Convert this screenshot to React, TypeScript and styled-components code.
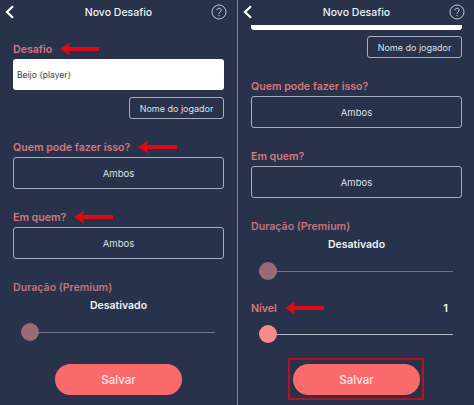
import React from "react";
import styled, { createGlobalStyle } from "styled-components";

const Global = createGlobalStyle`
  html, body { margin: 0; padding: 0; background: #28324a; }
  #root { width: 474px; height: 405px; overflow: hidden; }
  *, *::before, *::after { box-sizing: border-box; }
`;

const Page = styled.div`
  display: grid;
  grid-template-columns: 237px 237px;
  width: 474px;
  height: 405px;
  font-family: Inter, "Liberation Sans", sans-serif;
  background: #28324a;
`;

const Phone = styled.section<{ $divider?: boolean }>`
  display: flex;
  flex-direction: column;
  height: 405px;
  padding: 0 ${(p) => (p.$divider ? "12px" : "13px")} 10px 13px;
  border-left: ${(p) => (p.$divider ? "1px solid #7d8796" : "none")};
  overflow: hidden;
`;

const Header = styled.header`
  flex: none;
  display: flex;
  align-items: center;
  justify-content: space-between;
  height: 24px;
  margin: 0 -4px 0 -12px;
`;

const Title = styled.h1`
  margin: 0 0 0 8px;
  font-size: 10.5px;
  font-weight: 500;
  color: #eef0f4;
`;

const IconSlot = styled.span`
  display: flex;
  width: 18px;
  height: 18px;
  align-items: center;
  justify-content: center;
`;

const Label = styled.div<{ $top: number; $dim?: boolean }>`
  display: flex;
  align-items: center;
  height: 16px;
  margin-top: ${(p) => p.$top}px;
  font-size: 10.6px;
  font-weight: 600;
  color: ${(p) => (p.$dim ? "#c4727b" : "#d9767e")};
`;

const ArrowMark = styled.svg`
  flex: none;
  margin-left: 8px;
`;

const LevelValue = styled.span`
  margin-left: auto;
  margin-right: 14px;
  font-size: 11px;
  color: #f2f3f6;
`;

const TextInput = styled.div`
  height: 31px;
  margin-top: 2px;
  padding-left: 4px;
  display: flex;
  align-items: center;
  background: #fff;
  border-radius: 3px;
  font-size: 8.5px;
  color: #3c3f48;
`;

const InputEdge = styled.div`
  height: 5px;
  margin-top: 1px;
  background: #fff;
  border-radius: 0 0 3px 3px;
`;

const TagButton = styled.button<{ $top: number }>`
  display: block;
  align-self: flex-end;
  width: 95px;
  height: 22px;
  margin-top: ${(p) => p.$top}px;
  padding: 0;
  background: transparent;
  border: 1px solid #a4afc3;
  border-radius: 3px;
  font-family: inherit;
  font-size: 9px;
  color: #dfe1e6;
`;

const Choice = styled.div`
  flex: none;
  display: flex;
  align-items: center;
  justify-content: center;
  height: 32px;
  margin-top: 2px;
  border: 1px solid #a4afc3;
  border-radius: 3px;
  font-size: 9.5px;
  color: #dfe1e6;
`;

const Value = styled.div<{ $top: number }>`
  margin-top: ${(p) => p.$top}px;
  height: 16px;
  line-height: 16px;
  text-align: center;
  font-size: 10.5px;
  font-weight: 600;
  color: #f0f1f5;
`;

const Slider = styled.div<{ $top: number; $active?: boolean }>`
  flex: none;
  position: relative;
  height: 18px;
  margin: ${(p) => p.$top}px 9px 0 8px;
  display: flex;
  align-items: center;
  &::before {
    content: "";
    flex: 1;
    height: 1px;
    background: ${(p) => (p.$active ? "#b3b8c6" : "#6e7484")};
  }
  &::after {
    content: "";
    position: absolute;
    left: 0;
    top: 0;
    width: 18px;
    height: 18px;
    border-radius: 50%;
    background: ${(p) => (p.$active ? "#fc8a88" : "#9c6a76")};
  }
`;

const SaveRow = styled.div<{ $highlight?: boolean }>`
  margin-top: auto;
  display: flex;
  justify-content: center;
  position: relative;
  ${(p) =>
    p.$highlight
      ? `&::after {
          content: "";
          position: absolute;
          left: 37px;
          top: -6px;
          width: 136px;
          height: 42px;
          border: 2px solid #b5121f;
        }`
      : ""}
`;

const SaveButton = styled.button`
  width: 127px;
  height: 31px;
  padding: 0;
  border: none;
  border-radius: 16px;
  background: #fb6a6b;
  font-family: inherit;
  font-size: 11.5px;
  font-weight: 500;
  color: #fbe6e4;
`;

const Arrow = () => (
  <ArrowMark width="39" height="14" viewBox="0 0 39 14">
    <path d="M0 7 L10 0.5 L9 5 L39 5 L39 9 L9 9 L10 13.5 Z" fill="#dc0a14" />
  </ArrowMark>
);

const Back = () => (
  <IconSlot>
    <svg width="10" height="14" viewBox="0 0 10 14" fill="none">
      <path d="M8 1.2 L2 7 L8 12.8" stroke="#fff" strokeWidth="2.2" />
    </svg>
  </IconSlot>
);

const Help = () => (
  <IconSlot>
    <svg width="16" height="16" viewBox="0 0 16 16" fill="none">
      <circle cx="8" cy="8" r="7" stroke="#d5d8df" strokeWidth="0.9" />
      <path d="M5.9 6.2 C5.9 3.6 10.2 3.6 10.2 6.2 C10.2 7.8 8 7.8 8 9.6" stroke="#d5d8df" strokeWidth="1" />
      <circle cx="8" cy="11.6" r="0.7" fill="#d5d8df" />
    </svg>
  </IconSlot>
);

const TopBar = () => (
  <Header>
    <Back />
    <Title>Novo Desafio</Title>
    <Help />
  </Header>
);

export default function App() {
  return (
    <Page>
      <Global />
      <Phone>
        <TopBar />
        <Label $top={17}>
          Desafio
          <Arrow />
        </Label>
        <TextInput>Beijo {"{player}"}</TextInput>
        <TagButton $top={7}>Nome do jogador</TagButton>
        <Label $top={20}>
          Quem pode fazer isso?
          <Arrow />
        </Label>
        <Choice>Ambos</Choice>
        <Label $top={20}>
          Em quem?
          <Arrow />
        </Label>
        <Choice>Ambos</Choice>
        <Label $top={20} $dim>
          Duração (Premium)
        </Label>
        <Value $top={3}>Desativado</Value>
        <Slider $top={9} />
        <SaveRow>
          <SaveButton>Salvar</SaveButton>
        </SaveRow>
      </Phone>
      <Phone $divider>
        <TopBar />
        <InputEdge />
        <TagButton $top={6}>Nome do jogador</TagButton>
        <Label $top={20}>Quem pode fazer isso?</Label>
        <Choice>Ambos</Choice>
        <Label $top={20}>Em quem?</Label>
        <Choice>Ambos</Choice>
        <Label $top={20} $dim>
          Duração (Premium)
        </Label>
        <Value $top={3}>Desativado</Value>
        <Slider $top={9} />
        <Label $top={20}>
          Nível
          <Arrow />
          <LevelValue>1</LevelValue>
        </Label>
        <Slider $top={9} $active />
        <SaveRow $highlight>
          <SaveButton>Salvar</SaveButton>
        </SaveRow>
      </Phone>
    </Page>
  );
}
